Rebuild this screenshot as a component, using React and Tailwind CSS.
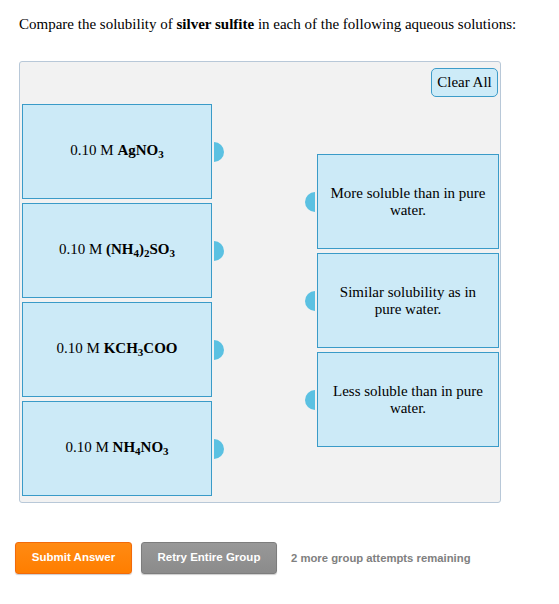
const LEFT = [
  { id: 'agno3', parts: [['0.10 M '], ['AgNO', 'b'], ['3', 'sub']] },
  { id: 'nh4so3', parts: [['0.10 M '], ['(NH', 'b'], ['4', 'sub'], [')', 'b'], ['2', 'sub'], ['SO', 'b'], ['3', 'sub']] },
  { id: 'kch3coo', parts: [['0.10 M '], ['KCH', 'b'], ['3', 'sub'], ['COO', 'b']] },
  { id: 'nh4no3', parts: [['0.10 M '], ['NH', 'b'], ['4', 'sub'], ['NO', 'b'], ['3', 'sub']] },
];

const RIGHT = [
  'More soluble than in pure water.',
  'Similar solubility as in pure water.',
  'Less soluble than in pure water.',
];

function Formula({ parts }) {
  return (
    <span>
      {parts.map(([t, kind], i) =>
        kind === 'sub' ? (
          <sub key={i} className="font-bold text-[11px] relative top-[3px]">{t}</sub>
        ) : kind === 'b' ? (
          <b key={i}>{t}</b>
        ) : (
          <span key={i}>{t}</span>
        )
      )}
    </span>
  );
}

function Handle({ side }) {
  return (
    <div
      className={
        side === 'right'
          ? 'w-[10px] h-[20px] bg-[#5bc1e2] rounded-r-full ml-[2px]'
          : 'w-[10px] h-[20px] bg-[#5bc1e2] rounded-l-full mr-[2px]'
      }
    />
  );
}

export default function App() {
  return (
    <div className="w-[559px] h-[604px] bg-white pt-[15px] text-black" style={{ fontFamily: '"Liberation Serif", "Times New Roman", serif' }}>
      <p className="pl-[19px] text-[15px] leading-[18px]">
        Compare the solubility of <b>silver sulfite</b> in each of the following aqueous solutions:
      </p>

      <div className="ml-[19px] mt-[28px] w-[482px] h-[442px] bg-[#f2f2f2] border border-[#b8c8d8] rounded-[3px] pl-[2px] pr-[1px] flex flex-col">
        <div className="flex justify-end pt-[6px] pr-[1px]">
          <button className="w-[67px] h-[29px] bg-[#cdebf8] border border-[#3d9cc9] rounded-[5px] text-[15px] leading-none">
            Clear All
          </button>
        </div>

        <div className="flex justify-between mt-[7px]">
          <div className="flex flex-col gap-[4px]">
            {LEFT.map((item) => (
              <div key={item.id} className="flex items-center">
                <div className="w-[190px] h-[95px] bg-[#cceaf7] border border-[#3a9bc8] flex items-center justify-center text-[15px] pb-[2px]">
                  <Formula parts={item.parts} />
                </div>
                <Handle side="right" />
              </div>
            ))}
          </div>

          <div className="flex flex-col gap-[4px] mt-[50px]">
            {RIGHT.map((text) => (
              <div key={text} className="flex items-center">
                <Handle side="left" />
                <div className="w-[182px] h-[95px] bg-[#cceaf7] border border-[#3a9bc8] flex items-center justify-center text-center text-[15px] leading-[17px] px-[8px]">
                  {text}
                </div>
              </div>
            ))}
          </div>
        </div>
      </div>

      <div className="flex items-center mt-[39px] pl-[15px]" style={{ fontFamily: '"Liberation Sans", Arial, sans-serif' }}>
        <button className="w-[117px] h-[32px] rounded-[3px] border border-[#f26a0a] bg-linear-to-b from-[#ff8a12] to-[#ff7e00] text-white font-bold text-[11.5px] shadow-[0_1px_1px_rgba(0,0,0,0.2)]">
          Submit Answer
        </button>
        <button className="ml-[9px] w-[136px] h-[32px] rounded-[3px] border border-[#7d7d7d] bg-linear-to-b from-[#989898] to-[#8b8b8b] text-white font-bold text-[11.5px] shadow-[0_1px_1px_rgba(0,0,0,0.2)]">
          Retry Entire Group
        </button>
        <span className="ml-[14px] text-[11.3px] font-bold text-[#808080]">2 more group attempts remaining</span>
      </div>
    </div>
  );
}
